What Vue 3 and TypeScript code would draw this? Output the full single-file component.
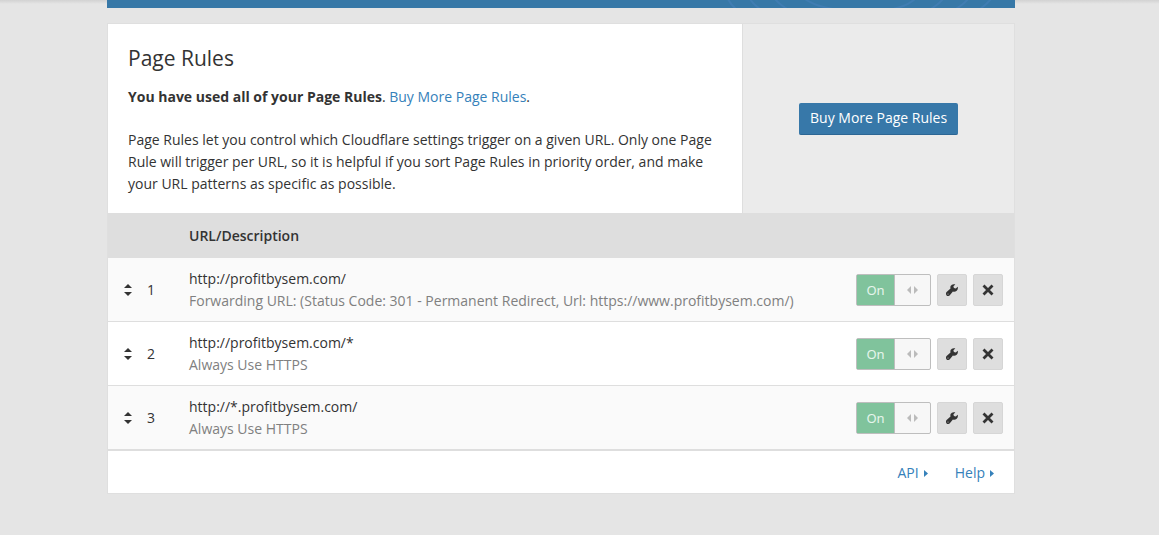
<script setup lang="ts">
import { ref } from 'vue'

interface PageRule {
  id: number
  url: string
  description: string
  enabled: boolean
}

const rules = ref<PageRule[]>([
  {
    id: 1,
    url: 'http://profitbysem.com/',
    description: 'Forwarding URL: (Status Code: 301 - Permanent Redirect, Url: https://www.profitbysem.com/)',
    enabled: true,
  },
  { id: 2, url: 'http://profitbysem.com/*', description: 'Always Use HTTPS', enabled: true },
  { id: 3, url: 'http://*.profitbysem.com/', description: 'Always Use HTTPS', enabled: true },
])

const footerLinks: string[] = ['API', 'Help']

function removeRule(id: number): void {
  rules.value = rules.value.filter((rule) => rule.id !== id)
}
</script>

<template>
  <div class="page">
    <div class="banner" aria-hidden="true">
      <svg width="290" height="8" viewBox="0 0 290 8">
        <g fill="none" stroke="#407db2" stroke-width="2">
          <path d="M3 -1 Q6 5 11 9" />
          <path d="M25 -1 Q28 4 35 9" />
          <path d="M50 -1 Q54 4 62 9" />
          <path d="M80 -1 Q90 6 108 9" />
          <path d="M168 9 Q182 6 190 -1" />
          <path d="M206 9 Q214 4 218 -1" />
          <path d="M231 9 Q239 4 243 -1" />
          <path d="M255 9 Q262 4 266 -1" />
        </g>
      </svg>
    </div>

    <section class="card">
      <div class="intro">
        <div class="intro-text">
          <h1>Page Rules</h1>
          <p class="usage"><strong>You have used all of your Page Rules</strong>. <a href="#buy">Buy More Page Rules</a>.</p>
          <p>
            Page Rules let you control which Cloudflare settings trigger on a given URL. Only one Page Rule will
            trigger per URL, so it is helpful if you sort Page Rules in priority order, and make your URL patterns as
            specific as possible.
          </p>
        </div>
        <div class="intro-action">
          <button type="button" class="buy">Buy More Page Rules</button>
        </div>
      </div>

      <table class="rules">
        <thead>
          <tr>
            <th class="order"></th>
            <th scope="col">URL/Description</th>
            <th class="controls"></th>
          </tr>
        </thead>
        <tbody>
          <tr v-for="rule in rules" :key="rule.id">
            <td class="order">
              <div class="order-inner">
                <svg width="8" height="12" viewBox="0 0 8 12" aria-hidden="true">
                  <path d="M0 4 L4 0 L8 4 Z M0 8 L4 12 L8 8 Z" fill="#333" />
                </svg>
                <span>{{ rule.id }}</span>
              </div>
            </td>
            <td>
              <div class="url">{{ rule.url }}</div>
              <div class="description">{{ rule.description }}</div>
            </td>
            <td class="controls">
              <div class="controls-inner">
                <label class="toggle" :class="{ off: !rule.enabled }">
                  <input v-model="rule.enabled" type="checkbox" :aria-label="'Enable rule ' + rule.id" />
                  <span class="state">{{ rule.enabled ? 'On' : 'Off' }}</span>
                  <span class="handle">
                    <svg width="11" height="8" viewBox="0 0 11 8" aria-hidden="true">
                      <path d="M4 0 V8 L0 4 Z M7 0 V8 L11 4 Z" fill="#bbb" />
                    </svg>
                  </span>
                </label>
                <button type="button" class="icon-button" :aria-label="'Edit rule ' + rule.id">
                  <svg width="12" height="12" viewBox="0 0 12 12" aria-hidden="true">
                    <path
                      d="M11.7 2.7 L9.8 4.6 L7.9 4.1 L7.4 2.2 L9.3 .4 C7.4 -.3 5.4 .4 4.6 2.1 C4.3 2.9 4.3 3.6 4.5 4.4 L.6 8.1 C-.3 9 -.3 10.5 .6 11.4 C1.5 12.3 3 12.2 3.8 11.3 L6.9 7.6 C8.1 8 9.6 7.8 10.7 6.8 C11.8 5.7 12.2 4.1 11.7 2.7 Z M2 9.5 A.5 .5 0 1 1 2 10.5 A.5 .5 0 1 1 2 9.5 Z"
                      fill="#333"
                      fill-rule="evenodd"
                    />
                  </svg>
                </button>
                <button type="button" class="icon-button" :aria-label="'Delete rule ' + rule.id" @click="removeRule(rule.id)">
                  <svg width="12" height="12" viewBox="0 0 12 12" aria-hidden="true">
                    <path d="M1.5 1.5 L10.5 10.5 M10.5 1.5 L1.5 10.5" stroke="#333" stroke-width="2.8" />
                  </svg>
                </button>
              </div>
            </td>
          </tr>
        </tbody>
      </table>

      <footer class="links">
        <a v-for="link in footerLinks" :key="link" :href="'#' + link.toLowerCase()">
          {{ link }}
          <svg width="4" height="7" viewBox="0 0 4 7" aria-hidden="true"><path d="M0 0 L4 3.5 L0 7 Z" fill="#3581ba" /></svg>
        </a>
      </footer>
    </section>
  </div>
</template>

<style>
body {
  background: #e5e5e5;
}
</style>

<style scoped>
.page {
  padding: 0 144px 40px 107px;
  background: linear-gradient(#d2d2d2, #e5e5e5 4px);
  color: #333;
  font-family: 'Open Sans', 'Noto Sans', sans-serif;
  font-size: 14px;
  line-height: 22px;
}

a {
  color: #3581ba;
  text-decoration: none;
}

.banner {
  display: flex;
  justify-content: flex-end;
  height: 8px;
  margin-bottom: 15px;
  background: #3778a7;
}

.card {
  background: #fff;
  border: 1px solid #dfdfdf;
}

.intro {
  display: grid;
  grid-template-columns: 7fr 3fr;
}

.intro-text {
  padding: 19px 20px 18px;
}

h1 {
  margin: 0 0 13px;
  font-size: 21px;
  font-weight: 400;
  line-height: 30px;
}

p {
  margin: 0;
}

.usage {
  margin-bottom: 21px;
}

.intro-action {
  display: flex;
  align-items: center;
  justify-content: center;
  background: #ebebeb;
  border-left: 1px solid #dedede;
}

.buy {
  height: 32px;
  padding: 0 11px;
  border: 0;
  border-bottom: 1px solid #2c6694;
  border-radius: 2px;
  background: #3778a9;
  color: #fff;
  font: inherit;
}

.rules {
  width: 100%;
  border-collapse: collapse;
}

.rules th {
  height: 45px;
  padding: 0;
  background: #dedede;
  font-weight: 600;
  text-align: left;
}

.rules td {
  padding: 10px 0 9px;
  border-bottom: 1px solid #dedede;
}

.rules tbody tr:nth-child(odd) {
  background: #fafafa;
}

.rules tbody tr:last-child td {
  border-bottom-width: 2px;
}

.rules .order {
  width: 81px;
}

.order-inner {
  display: flex;
  align-items: center;
  gap: 15px;
  padding-left: 16px;
}

.description {
  color: #808080;
}

.rules .controls {
  width: 158px;
}

.controls-inner {
  display: flex;
  justify-content: flex-end;
  gap: 6px;
  padding-right: 11px;
}

.toggle {
  position: relative;
  display: grid;
  grid-template-columns: 38px 1fr;
  box-sizing: border-box;
  width: 75px;
  height: 32px;
  border: 1px solid #bebebe;
  border-radius: 2px;
  background: #f7f7f7;
  font: 13px/30px 'Noto Sans', sans-serif;
  text-align: center;
}

.toggle input {
  position: absolute;
  inset: 0;
  width: 100%;
  height: 100%;
  margin: 0;
  opacity: 0;
}

.state {
  border-right: 1px solid #bebebe;
  background: #80c39c;
  color: #e6f5ec;
}

.off .state {
  background: #bbb;
}

.handle {
  display: flex;
  align-items: center;
  justify-content: center;
}

.icon-button {
  display: flex;
  align-items: center;
  justify-content: center;
  width: 30px;
  height: 32px;
  padding: 0;
  border: 1px solid #d6d6d6;
  border-radius: 2px;
  background: #dedede;
}

.links {
  display: flex;
  justify-content: flex-end;
  gap: 27px;
  padding: 11px 20px 9px;
}

.links a {
  display: flex;
  align-items: center;
  gap: 5px;
}
</style>
